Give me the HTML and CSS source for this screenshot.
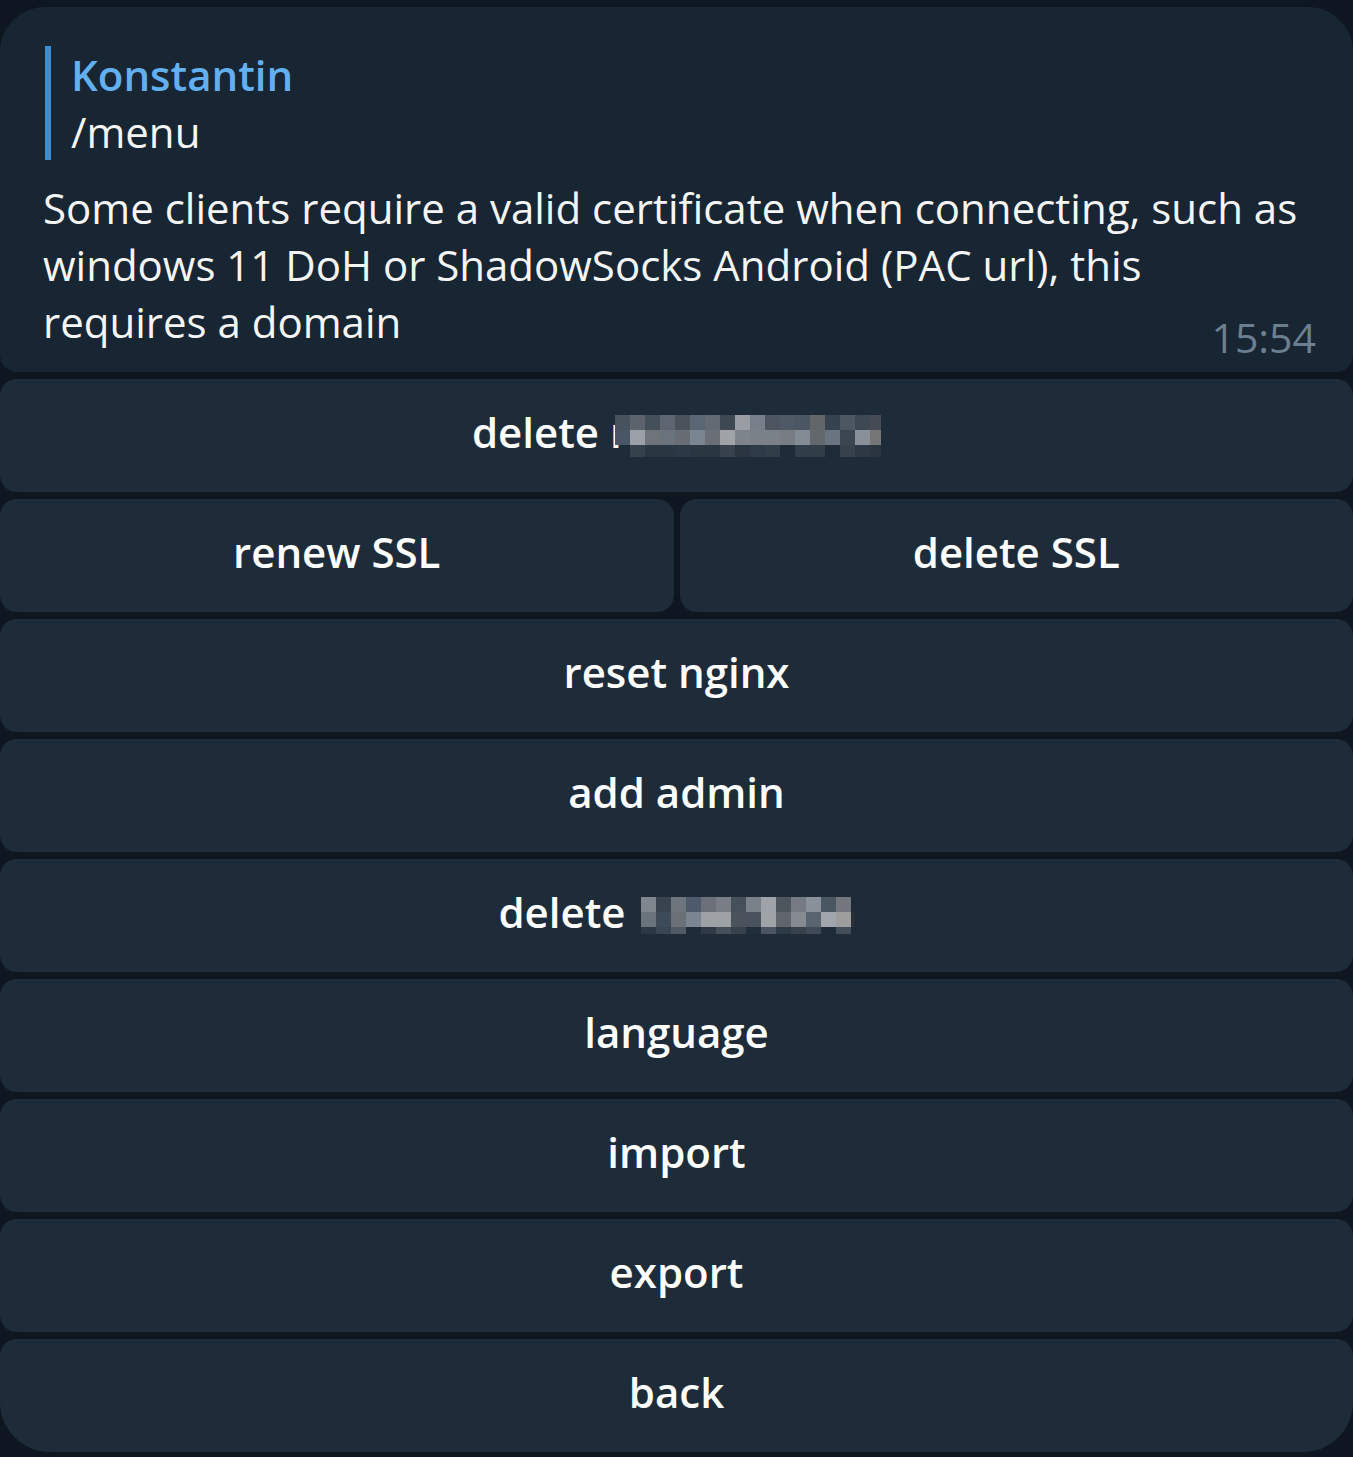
FILE: index.html
```html
<!DOCTYPE html>
<html lang="en">
<head>
<meta charset="utf-8">
<title>Menu</title>
<link rel="stylesheet" href="styles.css">
</head>
<body>
<div class="chat">
  <div class="bubble">
    <div class="reply">
      <div class="reply-name">Konstantin</div>
      <div class="reply-text">/menu</div>
    </div>
    <div class="msg-text">Some clients require a valid certificate when connecting, such as windows 11 DoH or ShadowSocks Android (PAC url), this requires a domain</div>
    <span class="msg-time">15:54</span>
  </div>
  <div class="keyboard">
    <div class="kb-row"><div class="kb-btn"><span class="lbl">delete r</span><svg class="blur blur-a" width="266" height="42" viewBox="0 0 266 42">
      <rect x="0" y="0" width="15" height="15" fill="#48525e"/><rect x="15" y="0" width="15" height="15" fill="#5c636d"/><rect x="30" y="0" width="15" height="15" fill="#454f5a"/><rect x="45" y="0" width="15" height="15" fill="#5c6570"/><rect x="60" y="0" width="15" height="15" fill="#4a525c"/><rect x="75" y="0" width="15" height="15" fill="#5b6674"/><rect x="90" y="0" width="15" height="15" fill="#646a74"/><rect x="105" y="0" width="15" height="15" fill="#3e4853"/><rect x="120" y="0" width="15" height="15" fill="#9a9ea4"/><rect x="135" y="0" width="15" height="15" fill="#777f8a"/><rect x="150" y="0" width="15" height="15" fill="#4c5560"/><rect x="165" y="0" width="15" height="15" fill="#4e5965"/><rect x="180" y="0" width="15" height="15" fill="#4b5663"/><rect x="195" y="0" width="15" height="15" fill="#626669"/><rect x="210" y="0" width="15" height="15" fill="#36424f"/><rect x="225" y="0" width="15" height="15" fill="#4d5763"/><rect x="240" y="0" width="15" height="15" fill="#3e4853"/><rect x="255" y="0" width="11" height="15" fill="#454a54"/>
      <rect x="0" y="15" width="15" height="15" fill="#485666"/><rect x="15" y="15" width="15" height="15" fill="#9aa0a6"/><rect x="30" y="15" width="15" height="15" fill="#6f747b"/><rect x="45" y="15" width="15" height="15" fill="#6b737c"/><rect x="60" y="15" width="15" height="15" fill="#676c75"/><rect x="75" y="15" width="15" height="15" fill="#7a8591"/><rect x="90" y="15" width="15" height="15" fill="#6a6f77"/><rect x="105" y="15" width="15" height="15" fill="#a0a3a7"/><rect x="120" y="15" width="15" height="15" fill="#7e848b"/><rect x="135" y="15" width="15" height="15" fill="#7b8189"/><rect x="150" y="15" width="15" height="15" fill="#7b8189"/><rect x="165" y="15" width="15" height="15" fill="#787d85"/><rect x="180" y="15" width="15" height="15" fill="#838b94"/><rect x="195" y="15" width="15" height="15" fill="#63686d"/><rect x="210" y="15" width="15" height="15" fill="#6a7480"/><rect x="225" y="15" width="15" height="15" fill="#3a4550"/><rect x="240" y="15" width="15" height="15" fill="#8a9099"/><rect x="255" y="15" width="11" height="15" fill="#767676"/>
      <rect x="15" y="30" width="15" height="12" fill="#35414d"/><rect x="30" y="30" width="15" height="12" fill="#2a3642"/><rect x="45" y="30" width="15" height="12" fill="#2a3642"/><rect x="60" y="30" width="15" height="12" fill="#2c3845"/><rect x="75" y="30" width="15" height="12" fill="#2a3642"/><rect x="90" y="30" width="15" height="12" fill="#2a3642"/><rect x="105" y="30" width="15" height="12" fill="#37424d"/><rect x="120" y="30" width="15" height="12" fill="#2a3541"/><rect x="135" y="30" width="15" height="12" fill="#2e3a47"/><rect x="150" y="30" width="15" height="12" fill="#313d49"/><rect x="165" y="30" width="15" height="12" fill="#1f2b38"/><rect x="180" y="30" width="15" height="12" fill="#313d49"/><rect x="195" y="30" width="15" height="12" fill="#313d49"/><rect x="210" y="30" width="15" height="12" fill="#1f2b38"/><rect x="225" y="30" width="15" height="12" fill="#36414c"/><rect x="240" y="30" width="15" height="12" fill="#2d3844"/><rect x="255" y="30" width="11" height="12" fill="#2a3541"/>
    </svg></div></div>
    <div class="kb-row kb-row-2"><div class="kb-btn"><span class="lbl">renew SSL</span></div><div class="kb-btn"><span class="lbl">delete SSL</span></div></div>
    <div class="kb-row"><div class="kb-btn"><span class="lbl">reset nginx</span></div></div>
    <div class="kb-row"><div class="kb-btn"><span class="lbl">add admin</span></div></div>
    <div class="kb-row"><div class="kb-btn"><span class="lbl">delete</span><svg class="blur blur-b" width="214" height="37" viewBox="0 0 214 37">
      <rect x="0" y="0" width="15" height="15" fill="#7f868d"/><rect x="15" y="0" width="15" height="15" fill="#38434f"/><rect x="30" y="0" width="15" height="15" fill="#6f757c"/><rect x="45" y="0" width="15" height="15" fill="#4c5a6b"/><rect x="60" y="0" width="15" height="15" fill="#6b7079"/><rect x="75" y="0" width="15" height="15" fill="#797e86"/><rect x="90" y="0" width="15" height="15" fill="#46505b"/><rect x="105" y="0" width="15" height="15" fill="#7b8189"/><rect x="120" y="0" width="15" height="15" fill="#9ea3a9"/><rect x="135" y="0" width="15" height="15" fill="#4f555d"/><rect x="150" y="0" width="15" height="15" fill="#767b83"/><rect x="165" y="0" width="15" height="15" fill="#8a9099"/><rect x="180" y="0" width="15" height="15" fill="#4b5663"/><rect x="195" y="0" width="15" height="15" fill="#74787e"/>
      <rect x="0" y="15" width="15" height="15" fill="#6b737c"/><rect x="15" y="15" width="15" height="15" fill="#3d4a57"/><rect x="30" y="15" width="15" height="15" fill="#6b7077"/><rect x="45" y="15" width="15" height="15" fill="#7a8591"/><rect x="60" y="15" width="15" height="15" fill="#9ea1a6"/><rect x="75" y="15" width="15" height="15" fill="#9ea1a6"/><rect x="90" y="15" width="15" height="15" fill="#4a525c"/><rect x="105" y="15" width="15" height="15" fill="#4a535d"/><rect x="120" y="15" width="15" height="15" fill="#a0a4a9"/><rect x="135" y="15" width="15" height="15" fill="#60656c"/><rect x="150" y="15" width="15" height="15" fill="#868a91"/><rect x="165" y="15" width="15" height="15" fill="#5a6471"/><rect x="180" y="15" width="15" height="15" fill="#a0a6ac"/><rect x="195" y="15" width="15" height="15" fill="#9e9e9e"/><rect x="210" y="15" width="4" height="15" fill="#2a2f36"/>
      <rect x="0" y="30" width="15" height="7" fill="#2c3845"/><rect x="15" y="30" width="15" height="7" fill="#3a4653"/><rect x="30" y="30" width="15" height="7" fill="#505a65"/><rect x="45" y="30" width="15" height="7" fill="#1f2b38"/><rect x="60" y="30" width="15" height="7" fill="#2f3a46"/><rect x="75" y="30" width="15" height="7" fill="#454f5a"/><rect x="90" y="30" width="15" height="7" fill="#37424d"/><rect x="105" y="30" width="15" height="7" fill="#222e3b"/><rect x="120" y="30" width="15" height="7" fill="#4a5561"/><rect x="135" y="30" width="15" height="7" fill="#2f3a47"/><rect x="150" y="30" width="15" height="7" fill="#36414c"/><rect x="165" y="30" width="15" height="7" fill="#3f4a56"/><rect x="180" y="30" width="15" height="7" fill="#1f2b38"/><rect x="195" y="30" width="15" height="7" fill="#444e59"/>
    </svg></div></div>
    <div class="kb-row"><div class="kb-btn"><span class="lbl">language</span></div></div>
    <div class="kb-row"><div class="kb-btn"><span class="lbl">import</span></div></div>
    <div class="kb-row"><div class="kb-btn"><span class="lbl">export</span></div></div>
    <div class="kb-row kb-last"><div class="kb-btn"><span class="lbl">back</span></div></div>
  </div>
</div>
</body>
</html>
```

FILE: styles.css
```css
html {
  background: #0e1621;
}
body {
  margin: 0;
  padding: 7px 0 0;
  background: #0e1621;
  font-family: "Open Sans", "Noto Sans", sans-serif;
  color: #f5f5f5;
}
.chat {
  width: 1353px;
}
.bubble {
  position: relative;
  background: #182533;
  border-radius: 45px 45px 17px 17px;
  padding: 39px 53px 22px 43px;
}
.reply {
  border-left: 6px solid #3f8dcd;
  margin-left: 2px;
  padding-left: 20px;
  font-size: 42px;
  line-height: 57px;
}
.reply-name {
  color: #62b0f0;
  font-weight: 600;
}
.reply-text {
  color: #f5f5f5;
}
.msg-text {
  margin-top: 19px;
  font-size: 42px;
  line-height: 57px;
}
.msg-time {
  position: absolute;
  right: 37px;
  bottom: 14px;
  font-size: 41px;
  line-height: 41px;
  color: #6c7f90;
}
.keyboard {
  margin-top: 7px;
  display: flex;
  flex-direction: column;
  gap: 7px;
}
.kb-row {
  display: flex;
  gap: 6px;
}
.kb-btn {
  flex: 1 1 0;
  height: 113px;
  background: #1e2c3a;
  border-radius: 17px;
  display: flex;
  align-items: center;
  justify-content: center;
  font-size: 42px;
  font-weight: 600;
  color: #ffffff;
  box-sizing: border-box;
  padding-bottom: 8px;
}
.kb-last .kb-btn {
  border-radius: 17px 17px 50px 50px;
}
.blur {
  display: block;
  flex: none;
}
.blur-a {
  margin-left: -13px;
  margin-top: 8px;
}
.blur-b {
  margin-left: 15px;
  margin-top: 8px;
}
```
